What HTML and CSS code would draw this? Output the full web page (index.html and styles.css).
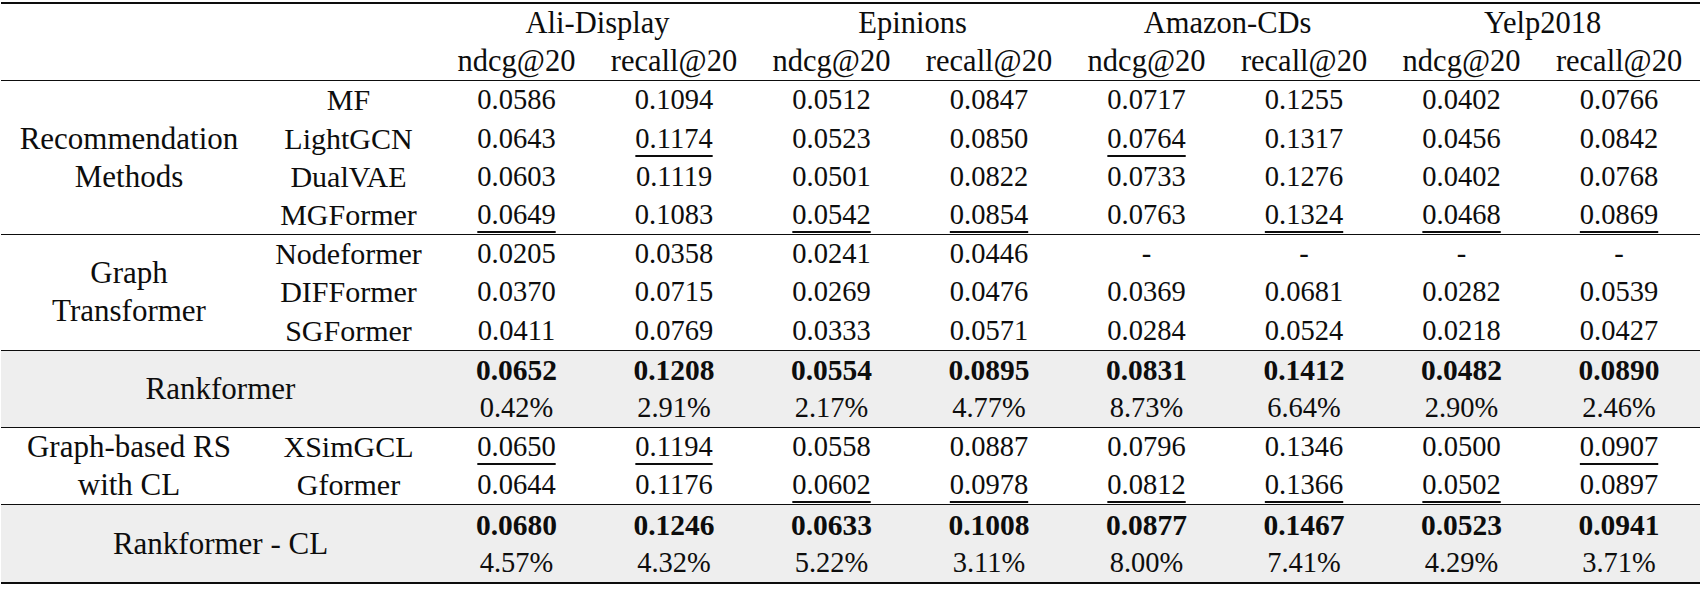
FILE: index.html
```html
<!DOCTYPE html>
<html lang="en">
<head>
<meta charset="utf-8">
<title>Results</title>
<link rel="stylesheet" href="styles.css">
</head>
<body>
<table class="results">
  <colgroup>
    <col class="c-group"><col class="c-method">
    <col class="c-ndcg"><col class="c-recall">
    <col class="c-ndcg"><col class="c-recall">
    <col class="c-ndcg"><col class="c-recall">
    <col class="c-ndcg"><col class="c-recall">
  </colgroup>
  <thead>
    <tr class="head-top">
      <th></th><th></th>
      <th colspan="2">Ali-Display</th>
      <th colspan="2">Epinions</th>
      <th colspan="2">Amazon-CDs</th>
      <th colspan="2">Yelp2018</th>
    </tr>
    <tr class="head-sub">
      <th></th><th></th>
      <th>ndcg@20</th><th>recall@20</th>
      <th>ndcg@20</th><th>recall@20</th>
      <th>ndcg@20</th><th>recall@20</th>
      <th>ndcg@20</th><th>recall@20</th>
    </tr>
  </thead>
  <tbody class="sec">
    <tr>
      <td rowspan="4" class="grp">Recommendation<br>Methods</td>
      <td class="name">MF</td>
      <td>0.0586</td><td>0.1094</td><td>0.0512</td><td>0.0847</td><td>0.0717</td><td>0.1255</td><td>0.0402</td><td>0.0766</td>
    </tr>
    <tr>
      <td class="name">LightGCN</td>
      <td>0.0643</td><td><span class="u">0.1174</span></td><td>0.0523</td><td>0.0850</td><td><span class="u">0.0764</span></td><td>0.1317</td><td>0.0456</td><td>0.0842</td>
    </tr>
    <tr>
      <td class="name">DualVAE</td>
      <td>0.0603</td><td>0.1119</td><td>0.0501</td><td>0.0822</td><td>0.0733</td><td>0.1276</td><td>0.0402</td><td>0.0768</td>
    </tr>
    <tr>
      <td class="name">MGFormer</td>
      <td><span class="u">0.0649</span></td><td>0.1083</td><td><span class="u">0.0542</span></td><td><span class="u">0.0854</span></td><td>0.0763</td><td><span class="u">0.1324</span></td><td><span class="u">0.0468</span></td><td><span class="u">0.0869</span></td>
    </tr>
  </tbody>
  <tbody class="sec">
    <tr>
      <td rowspan="3" class="grp">Graph<br>Transformer</td>
      <td class="name">Nodeformer</td>
      <td>0.0205</td><td>0.0358</td><td>0.0241</td><td>0.0446</td><td>-</td><td>-</td><td>-</td><td>-</td>
    </tr>
    <tr>
      <td class="name">DIFFormer</td>
      <td>0.0370</td><td>0.0715</td><td>0.0269</td><td>0.0476</td><td>0.0369</td><td>0.0681</td><td>0.0282</td><td>0.0539</td>
    </tr>
    <tr>
      <td class="name">SGFormer</td>
      <td>0.0411</td><td>0.0769</td><td>0.0333</td><td>0.0571</td><td>0.0284</td><td>0.0524</td><td>0.0218</td><td>0.0427</td>
    </tr>
  </tbody>
  <tbody class="sec hl">
    <tr class="best">
      <td rowspan="2" colspan="2" class="ours">Rankformer</td>
      <td>0.0652</td><td>0.1208</td><td>0.0554</td><td>0.0895</td><td>0.0831</td><td>0.1412</td><td>0.0482</td><td>0.0890</td>
    </tr>
    <tr>
      <td>0.42%</td><td>2.91%</td><td>2.17%</td><td>4.77%</td><td>8.73%</td><td>6.64%</td><td>2.90%</td><td>2.46%</td>
    </tr>
  </tbody>
  <tbody class="sec">
    <tr>
      <td class="grp">Graph-based RS</td>
      <td class="name">XSimGCL</td>
      <td><span class="u">0.0650</span></td><td><span class="u">0.1194</span></td><td>0.0558</td><td>0.0887</td><td>0.0796</td><td>0.1346</td><td>0.0500</td><td><span class="u">0.0907</span></td>
    </tr>
    <tr>
      <td class="grp">with CL</td>
      <td class="name">Gformer</td>
      <td>0.0644</td><td>0.1176</td><td><span class="u">0.0602</span></td><td><span class="u">0.0978</span></td><td><span class="u">0.0812</span></td><td><span class="u">0.1366</span></td><td><span class="u">0.0502</span></td><td>0.0897</td>
    </tr>
  </tbody>
  <tbody class="sec hl last">
    <tr class="best">
      <td rowspan="2" colspan="2" class="ours">Rankformer - CL</td>
      <td>0.0680</td><td>0.1246</td><td>0.0633</td><td>0.1008</td><td>0.0877</td><td>0.1467</td><td>0.0523</td><td>0.0941</td>
    </tr>
    <tr>
      <td>4.57%</td><td>4.32%</td><td>5.22%</td><td>3.11%</td><td>8.00%</td><td>7.41%</td><td>4.29%</td><td>3.71%</td>
    </tr>
  </tbody>
</table>
</body>
</html>
```

FILE: styles.css
```css
html, body {
  margin: 0;
  padding: 0;
  background: #ffffff;
}

body {
  padding: 2px 4px 0 1px;
  font-family: "Liberation Serif", "Times New Roman", serif;
  color: #0d0d0d;
}

.results {
  width: 1699px;
  table-layout: fixed;
  border-collapse: collapse;
  font-size: 28.5px;
}

.c-group { width: 256px; }
.c-method { width: 183px; }
.c-ndcg { width: 153px; }
.c-recall { width: 162px; }

.results th,
.results td {
  padding: 0;
  height: 38.2px;
  line-height: 38px;
  text-align: center;
  vertical-align: middle;
  font-weight: normal;
  white-space: nowrap;
}

.results th {
  font-size: 30.5px;
}

.results td.grp,
.results td.ours {
  font-size: 31px;
}

.results td.name {
  font-size: 30px;
}

.results thead {
  border-top: 2px solid #0d0d0d;
  border-bottom: 1.5px solid #0d0d0d;
}

.results tbody.sec {
  border-top: 1px solid #0d0d0d;
}

.results tbody.last {
  border-bottom: 2px solid #0d0d0d;
}

.results tbody.hl {
  background: #eeeeee;
}

.results tr.best td {
  font-weight: bold;
  font-size: 29.5px;
}

.results tr.best td.ours {
  font-weight: normal;
  font-size: 31px;
}

.u {
  text-decoration: underline;
  text-decoration-thickness: 1.5px;
  text-underline-offset: 7px;
}
```
